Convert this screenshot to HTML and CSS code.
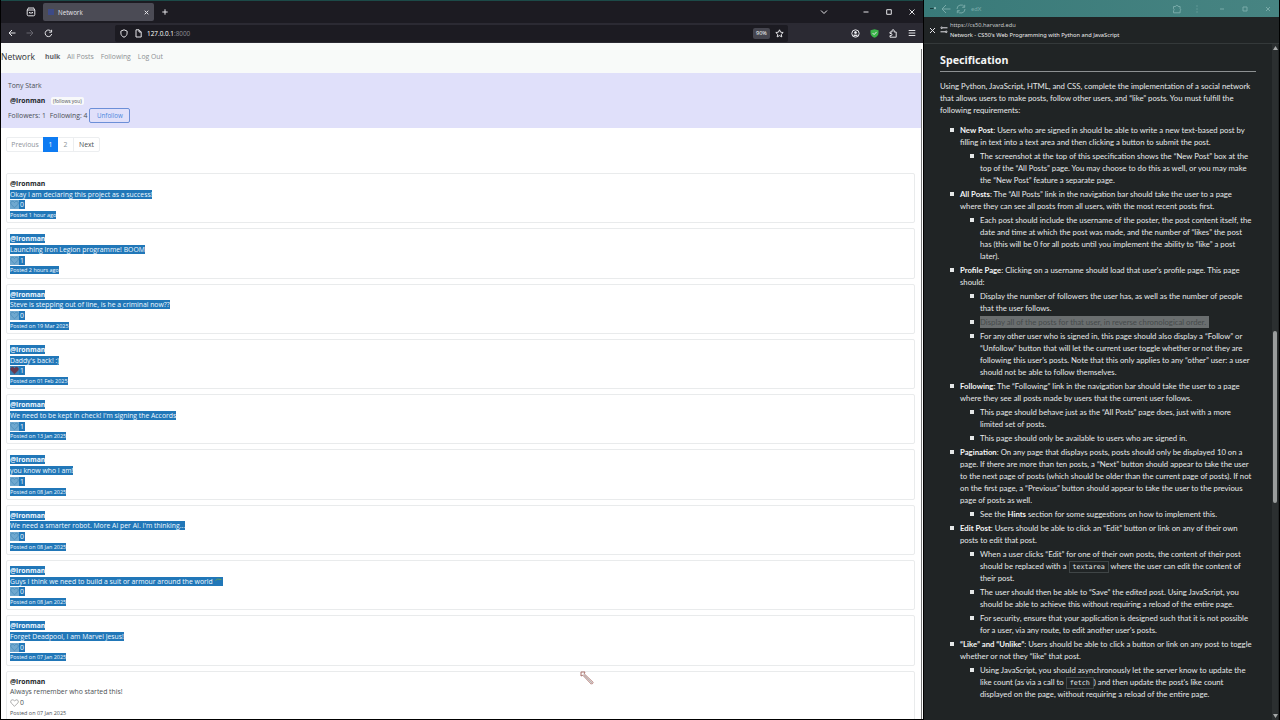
FILE: index.html
```
<!DOCTYPE html>
<html lang="en">
<head>
    <meta charset="UTF-8">
    <title>Network</title>
    <link rel="stylesheet" href="styles.css">
</head>
<body>
<div class="desktop">
    <div class="browser">
        <div class="tabs">
            <svg class="view" width="10" height="10" viewBox="0 0 10 10"><path d="M2 1h6M1.2 3h7.6v4.5a1.3 1.3 0 0 1-1.3 1.3h-5a1.3 1.3 0 0 1-1.3-1.3V3l1-1.8M8.8 3l-1-1.8M3.5 5v1h3V5"/></svg>
            <div class="tab"><i class="favicon"></i><span>Network</span>
                <svg width="5" height="5" viewBox="0 0 5 5"><path d="M.7.7l3.6 3.6M4.3.7L.7 4.3"/></svg>
            </div>
            <svg class="plus" width="6" height="6" viewBox="0 0 6 6"><path d="M3 .3v5.4M.3 3h5.4"/></svg>
            <div class="winbtns">
                <svg class="down" width="8" height="6" viewBox="0 0 8 6"><path d="M1 1.5l3 3 3-3"/></svg>
                <svg width="6" height="6" viewBox="0 0 6 6"><path d="M.5 3h5"/></svg>
                <svg width="6" height="6" viewBox="0 0 6 6"><path d="M.7.7h4.6v4.6H.7z"/></svg>
                <svg width="6" height="6" viewBox="0 0 6 6"><path d="M.5.5l5 5M5.5.5l-5 5"/></svg>
            </div>
        </div>
        <div class="toolbar">
            <svg class="back" width="8" height="8" viewBox="0 0 8 8"><path d="M7.5 4H1M4 1L1 4l3 3"/></svg>
            <svg class="forward" width="8" height="8" viewBox="0 0 8 8"><path d="M.5 4H7M4 1l3 3-3 3"/></svg>
            <svg class="reload" width="9" height="9" viewBox="0 0 9 9"><path d="M7.300 2.600A3.300 3.300 0 1 0 7.700 5M7.600.8v2.400H5.200"/></svg>
            <div class="address">
                <svg width="8" height="9" viewBox="0 0 8 9"><path d="M4 .8l3.1 1.3v2C7.100 6 6 7.500 4 8.200 2 7.500.9 6 .9 4.100v-2z"/></svg>
                <svg class="file" width="7" height="9" viewBox="0 0 7 9"><path d="M1 .8h3l2.200 2.200v5H1zM4 .8V3h2.200"/></svg>
                <span class="url"><b>127.0.0.1</b>:8000</span>
                <span class="zoom">90%</span>
                <svg class="star" width="9" height="9" viewBox="0 0 9 9"><path d="M4.500.8l1.100 2.400 2.600.3-1.900 1.800.5 2.600-2.300-1.300-2.300 1.300.5-2.600L.8 3.500l2.600-.3z"/></svg>
            </div>
            <div class="tools">
                <svg width="9" height="9" viewBox="0 0 9 9"><circle cx="4.500" cy="4.500" r="3.700"/><circle cx="4.500" cy="3.600" r="1" fill="#fbfbfe"/><path d="M2.500 6.400h4" stroke-width="1.500"/></svg>
                <svg width="9" height="9" viewBox="0 0 9 9"><path d="M4.500.3l4 1v2.400c0 2.400-1.500 4-4 5-2.500-1-4-2.600-4-5V1.300z" fill="#3bb54a" stroke="none"/><path d="M2.600 4l1.500 1.600 2.500-2.700"/></svg>
                <svg width="9" height="9" viewBox="0 0 9 9"><path d="M1 3h2V1.800a1.100 1.100 0 0 1 2.200 0V3h2v5.200H1V6.500h1a1 1 0 0 0 0-2H1z"/></svg>
                <svg width="8" height="8" viewBox="0 0 8 8"><path d="M.7 1.500h6.600M.7 4h6.600M.7 6.500h6.600"/></svg>
            </div>
        </div>
        <div class="page">
            <div class="content">
                <div class="navbar">
                    <span class="brand">Network</span>
                    <b>hulk</b>
                    <span>All Posts</span>
                    <span>Following</span>
                    <span>Log Out</span>
                </div>
                <div class="profile">
                    <p>Tony Stark</p>
                    <p class="user"><b>@ironman</b><span class="badge">(follows you)</span></p>
                    <p class="counts"><span>Followers: 1</span><span>Following: 4</span><span class="unfollow">Unfollow</span></p>
                </div>
                <div class="pagination">
                    <span class="prev">Previous</span>
                    <span class="current">1</span>
                    <span class="num">2</span>
                    <span class="next">Next</span>
                </div>
                <div class="posts">
                    <div class="post selected first">
                        <p class="name"><b>@ironman</b></p>
                        <p class="text"><span>Okay I am declaring this project as a success!</span></p>
                        <p class="like"><span><svg width="9" height="9" viewBox="0 0 9 9"><path d="M4.500 7.800L1.200 4.500C-.6 2 2.700-.1 4.500 2.500 6.300-.1 9.600 2 7.800 4.500z"/></svg>0</span></p>
                        <p class="date"><span>Posted 1 hour ago</span></p>
                    </div>
                    <div class="post selected">
                        <p class="name"><b>@ironman</b></p>
                        <p class="text"><span>Launching Iron Legion programme! BOOM</span></p>
                        <p class="like"><span><svg width="9" height="9" viewBox="0 0 9 9"><path d="M4.500 7.800L1.200 4.500C-.6 2 2.700-.1 4.500 2.500 6.300-.1 9.600 2 7.800 4.500z"/></svg>1</span></p>
                        <p class="date"><span>Posted 2 hours ago</span></p>
                    </div>
                    <div class="post selected">
                        <p class="name"><b>@ironman</b></p>
                        <p class="text"><span>Steve is stepping out of line, is he a criminal now??</span></p>
                        <p class="like"><span><svg width="9" height="9" viewBox="0 0 9 9"><path d="M4.500 7.800L1.200 4.500C-.6 2 2.700-.1 4.500 2.500 6.300-.1 9.600 2 7.800 4.500z"/></svg>0</span></p>
                        <p class="date"><span>Posted on 19 Mar 2025</span></p>
                    </div>
                    <div class="post selected">
                        <p class="name"><b>@ironman</b></p>
                        <p class="text"><span>Daddy's back! :)</span></p>
                        <p class="like liked"><span><svg width="9" height="9" viewBox="0 0 9 9"><path d="M4.500 7.800L1.200 4.500C-.6 2 2.700-.1 4.500 2.500 6.300-.1 9.600 2 7.800 4.500z"/></svg>1</span></p>
                        <p class="date"><span>Posted on 01 Feb 2025</span></p>
                    </div>
                    <div class="post selected">
                        <p class="name"><b>@ironman</b></p>
                        <p class="text"><span>We need to be kept in check! I'm signing the Accords</span></p>
                        <p class="like"><span><svg width="9" height="9" viewBox="0 0 9 9"><path d="M4.500 7.800L1.200 4.500C-.6 2 2.700-.1 4.500 2.500 6.300-.1 9.600 2 7.800 4.500z"/></svg>1</span></p>
                        <p class="date"><span>Posted on 13 Jan 2025</span></p>
                    </div>
                    <div class="post selected">
                        <p class="name"><b>@ironman</b></p>
                        <p class="text"><span>you know who I am!</span></p>
                        <p class="like"><span><svg width="9" height="9" viewBox="0 0 9 9"><path d="M4.500 7.800L1.200 4.500C-.6 2 2.700-.1 4.500 2.500 6.300-.1 9.600 2 7.800 4.500z"/></svg>1</span></p>
                        <p class="date"><span>Posted on 08 Jan 2025</span></p>
                    </div>
                    <div class="post selected">
                        <p class="name"><b>@ironman</b></p>
                        <p class="text"><span>We need a smarter robot. More AI per AI. I'm thinking...</span></p>
                        <p class="like"><span><svg width="9" height="9" viewBox="0 0 9 9"><path d="M4.500 7.800L1.200 4.500C-.6 2 2.700-.1 4.500 2.500 6.300-.1 9.600 2 7.800 4.500z"/></svg>0</span></p>
                        <p class="date"><span>Posted on 08 Jan 2025</span></p>
                    </div>
                    <div class="post selected">
                        <p class="name"><b>@ironman</b></p>
                        <p class="text"><span>Guys I think we need to build a suit or armour around the world <svg class="emoji" width="9" height="7" viewBox="0 0 9 7"><path d="M1.500 3.500l2-1.500 4 .7"/></svg></span></p>
                        <p class="like"><span><svg width="9" height="9" viewBox="0 0 9 9"><path d="M4.500 7.800L1.200 4.500C-.6 2 2.700-.1 4.500 2.500 6.300-.1 9.600 2 7.800 4.500z"/></svg>0</span></p>
                        <p class="date"><span>Posted on 08 Jan 2025</span></p>
                    </div>
                    <div class="post selected">
                        <p class="name"><b>@ironman</b></p>
                        <p class="text"><span>Forget Deadpool, I am Marvel Jesus!</span></p>
                        <p class="like"><span><svg width="9" height="9" viewBox="0 0 9 9"><path d="M4.500 7.800L1.200 4.500C-.6 2 2.700-.1 4.500 2.500 6.300-.1 9.600 2 7.800 4.500z"/></svg>0</span></p>
                        <p class="date"><span>Posted on 07 Jan 2025</span></p>
                    </div>
                    <div class="post">
                        <p class="name"><b>@ironman</b></p>
                        <p class="text"><span>Always remember who started this!</span></p>
                        <p class="like"><span><svg width="9" height="9" viewBox="0 0 9 9"><path d="M4.500 8.300L1.200 5C-.6 2.500 2.700.4 4.500 3 6.300.4 9.600 2.500 7.800 5z"/></svg>0</span></p>
                        <p class="date"><span>Posted on 07 Jan 2025</span></p>
                    </div>
                </div>
            </div>
            <div class="scroll"></div>
        </div>
    </div>

    <div class="app">
        <div class="titlebar">
            <svg class="tray" width="6" height="5" viewBox="0 0 6 5"><path d="M0 2.500h3.500" stroke="#173b3b"/><path d="M4 1.500h2L5 3.500z" fill="#d8eeee" stroke="none"/></svg>
            <svg width="10" height="10" viewBox="0 0 10 10"><path d="M9.500 5H1M5 1L1 5l4 4"/></svg>
            <svg width="10" height="10" viewBox="0 0 10 10"><path d="M1 5a4 4 0 0 1 7.500-2M9 5a4 4 0 0 1-7.500 2M8.700.8v2.500H6.200M1.300 9.200V6.700h2.500"/></svg>
            <span class="faded">edX</span>
            <div class="appbtns">
                <svg width="10" height="10" viewBox="0 0 10 10"><path d="M1.500 2.500h2.200a1.200 1.200 0 0 1 2.400 0h2v2.300a1.200 1.200 0 0 1 0 2v2H1.500v-2a1.200 1.200 0 0 0 0-2z"/></svg>
                <svg class="dots" width="4" height="8" viewBox="0 0 4 8"><path d="M2 .5v1M2 3.500v1M2 6.500v1"/></svg>
                <svg class="min" width="6" height="6" viewBox="0 0 6 6"><path d="M1 3h4"/></svg>
                <svg class="max" width="6" height="6" viewBox="0 0 6 6"><path d="M1 1h4v4H1z"/></svg>
                <svg class="shut" width="6" height="6" viewBox="0 0 6 6"><path d="M1 1l4 4M5 1L1 5"/></svg>
            </div>
        </div>
        <div class="origin">
            <svg width="7" height="7" viewBox="0 0 7 7"><path d="M1 1l5 5M6 1L1 6"/></svg>
            <svg class="tune" width="8" height="8" viewBox="0 0 8 8"><path d="M3 1.800h4.500M.5 5.800h4.500"/><circle cx="1.700" cy="1.800" r=".8"/><circle cx="6.200" cy="5.800" r=".8"/></svg>
            <p><span>https://cs50.harvard.edu</span><br>Network - CS50's Web Programming with Python and JavaScript</p>
        </div>
        <div class="reader">
            <div class="doc">
                <h2>Specification</h2>
                <p>Using Python, JavaScript, HTML, and CSS, complete the implementation of a social network<br>that allows users to make posts, follow other users, and “like” posts. You must fulfill the<br>following requirements:</p>
                <ul class="spec">
                    <li><b>New Post</b>: Users who are signed in should be able to write a new text-based post by<br>filling in text into a text area and then clicking a button to submit the post.
                        <ul>
                            <li>The screenshot at the top of this specification shows the “New Post” box at the<br>top of the “All Posts” page. You may choose to do this as well, or you may make<br>the “New Post” feature a separate page.</li>
                        </ul>
                    </li>
                    <li><b>All Posts</b>: The “All Posts” link in the navigation bar should take the user to a page<br>where they can see all posts from all users, with the most recent posts first.
                        <ul>
                            <li>Each post should include the username of the poster, the post content itself, the<br>date and time at which the post was made, and the number of “likes” the post<br>has (this will be 0 for all posts until you implement the ability to “like” a post<br>later).</li>
                        </ul>
                    </li>
                    <li><b>Profile Page</b>: Clicking on a username should load that user's profile page. This page<br>should:
                        <ul>
                            <li>Display the number of followers the user has, as well as the number of people<br>that the user follows.</li>
                            <li><span class="marked">Display all of the posts for that user, in reverse chronological order.</span></li>
                            <li>For any other user who is signed in, this page should also display a “Follow” or<br>“Unfollow” button that will let the current user toggle whether or not they are<br>following this user's posts. Note that this only applies to any “other” user: a user<br>should not be able to follow themselves.</li>
                        </ul>
                    </li>
                    <li><b>Following</b>: The “Following” link in the navigation bar should take the user to a page<br>where they see all posts made by users that the current user follows.
                        <ul>
                            <li>This page should behave just as the “All Posts” page does, just with a more<br>limited set of posts.</li>
                            <li>This page should only be available to users who are signed in.</li>
                        </ul>
                    </li>
                    <li><b>Pagination</b>: On any page that displays posts, posts should only be displayed 10 on a<br>page. If there are more than ten posts, a “Next” button should appear to take the user<br>to the next page of posts (which should be older than the current page of posts). If not<br>on the first page, a “Previous” button should appear to take the user to the previous<br>page of posts as well.
                        <ul>
                            <li>See the <b>Hints</b> section for some suggestions on how to implement this.</li>
                        </ul>
                    </li>
                    <li><b>Edit Post</b>: Users should be able to click an “Edit” button or link on any of their own<br>posts to edit that post.
                        <ul>
                            <li>When a user clicks “Edit” for one of their own posts, the content of their post<br>should be replaced with a <code>textarea</code> where the user can edit the content of<br>their post.</li>
                            <li>The user should then be able to “Save” the edited post. Using JavaScript, you<br>should be able to achieve this without requiring a reload of the entire page.</li>
                            <li>For security, ensure that your application is designed such that it is not possible<br>for a user, via any route, to edit another user's posts.</li>
                        </ul>
                    </li>
                    <li><b>“Like” and “Unlike”</b>: Users should be able to click a button or link on any post to toggle<br>whether or not they “like” that post.
                        <ul>
                            <li>Using JavaScript, you should asynchronously let the server know to update the<br>like count (as via a call to <code>fetch</code>) and then update the post's like count<br>displayed on the page, without requiring a reload of the entire page.</li>
                        </ul>
                    </li>
                </ul>
                <h2 class="hints">Hints</h2>
            </div>
            <div class="track">
                <svg width="5" height="4" viewBox="0 0 5 4"><path d="M0 4h5L2.500 0z"/></svg>
                <i class="thumb"></i>
                <svg width="5" height="4" viewBox="0 0 5 4"><path d="M0 0h5L2.500 4z"/></svg>
            </div>
        </div>
    </div>
</div>
<svg class="cursor" width="14" height="15" viewBox="0 0 14 15"><path d="M1 5V1h4L4.200 2.800l9 8.700-1.700 1.700-8.700-9z" fill="#fff" stroke="#a8706a"/><path d="M3.500 3.500l8.500 8.500" stroke="#999" stroke-width=".7"/></svg>
</body>
</html>
```
FILE: styles.css
```
* {
    margin: 0;
    padding: 0;
    box-sizing: border-box;
}

body {
    width: 1280px;
    height: 720px;
    overflow: hidden;
    background: #000;
    font-family: "Open Sans", "Noto Sans", sans-serif;
    font-size: 6.83px;
    white-space: nowrap;
}

ul {
    list-style: none;
}

svg {
    display: block;
    flex: none;
    fill: none;
    stroke: #e4e4e8;
}

.desktop {
    display: flex;
    height: 720px;
    padding-left: 1px;
}

/* browser window */
.browser {
    display: flex;
    flex-direction: column;
    width: 922px;
    height: 719px;
    border-top: 1px solid #1c4a48;
}

.tabs {
    display: flex;
    align-items: center;
    height: 22px;
    background: #1c1b22;
}

.tabs .view {
    margin-left: 25px;
}

.tab {
    display: flex;
    align-items: center;
    width: 111px;
    height: 18px;
    margin-left: 7px;
    padding: 0 5px 0 5px;
    border-radius: 2px;
    background: #4b4b55;
    color: #e8e8ee;
    font-size: 6.2px;
}

.tab span {
    flex: 1;
    margin-left: 4px;
}

.favicon {
    width: 6px;
    height: 6px;
    background: #3d4a86;
}

.plus {
    margin-left: 8px;
}

.winbtns {
    display: flex;
    align-items: center;
    gap: 17px;
    margin-left: auto;
    margin-right: 8px;
}

.winbtns .down {
    margin-right: 18px;
}

.toolbar {
    display: flex;
    align-items: center;
    height: 20px;
    padding-left: 7px;
    background: #2b2a33;
}

.toolbar .forward {
    margin-left: 10px;
    stroke: #66656e;
}

.toolbar .reload {
    margin-left: 10px;
}

.address {
    display: flex;
    align-items: center;
    width: 673px;
    height: 17px;
    margin-left: 62px;
    padding-left: 5px;
    border-radius: 2px;
    background: #1c1b22;
}

.address .file {
    margin-left: 7px;
}

.url {
    margin-left: 5px;
    font-size: 6.4px;
    color: #8f8f98;
}

.url b {
    font-weight: 400;
    color: #fff;
}

.zoom {
    width: 17px;
    height: 11px;
    margin-left: auto;
    border-radius: 2px;
    background: #45454f;
    color: #fff;
    font-size: 5.5px;
    line-height: 11px;
    text-align: center;
}

.address .star {
    margin: 0 4px 0 5px;
}

.tools {
    display: flex;
    align-items: center;
    gap: 10px;
    margin-left: auto;
    margin-right: 7px;
}

.page {
    display: flex;
    flex: 1;
    min-height: 0;
    background: #fff;
    color: #4a4f54;
}

.content {
    width: 920px;
    overflow: hidden;
}

.scroll {
    width: 1px;
    margin-top: 6px;
    background: #777;
}

.navbar {
    display: flex;
    align-items: center;
    height: 30px;
    padding-bottom: 4px;
    background: #f8faf9;
    color: #8d9093;
}

.navbar .brand {
    width: 44px;
    color: #2e3236;
    font-size: 8.5px;
}

.navbar b {
    width: 22px;
    color: #62666a;
}

.navbar span + span,
.navbar b + span {
    margin-right: 7px;
}

.profile {
    height: 55px;
    padding: 7px 0 0 7px;
    background: #e0e0fa;
}

.profile p {
    height: 11px;
    line-height: 11px;
}

.profile .user {
    display: flex;
    margin-top: 4px;
    padding-left: 2px;
}

.user b {
    width: 41px;
    color: #212529;
}

.badge {
    height: 8px;
    margin-top: 2px;
    padding: 0 2px;
    border-radius: 2px;
    background: #f8f9fa;
    font-size: 4.9px;
    line-height: 8px;
}

.profile .counts {
    display: flex;
    align-items: center;
    height: 15px;
    margin-top: 2px;
}

.counts span {
    margin-right: 4px;
}

.counts .unfollow {
    width: 41px;
    height: 15px;
    margin-left: -2px;
    border: 1px solid #6c8fd8;
    border-radius: 2px;
    color: #4a86dd;
    font-size: 6.2px;
    line-height: 13px;
    text-align: center;
}

.pagination {
    display: flex;
    width: 94px;
    height: 15px;
    margin: 9px 0 0 5px;
    border: 1px solid #eceef0;
    border-radius: 2px;
    line-height: 13px;
    text-align: center;
}

.prev {
    width: 36px;
    color: #8d9399;
}

.pagination .current {
    width: 15px;
    height: 15px;
    margin-top: -1px;
    background: #0d7bf2;
    color: #fff;
    line-height: 15px;
}

.num {
    width: 16px;
    border-right: 1px solid #eceef0;
    color: #8d9399;
}

.next {
    flex: 1;
}

.posts {
    margin: 21px 6px 0 5px;
}

.post {
    height: 50.3px;
    margin-bottom: 5px;
    padding: 5px 0 0 3px;
    border: 1px solid #e9ebec;
    border-radius: 2px;
}

.post p {
    height: 10.7px;
    line-height: 9px;
}

.post span,
.post b {
    display: inline-block;
    height: 9px;
}

.post b {
    color: #212529;
}

.like span {
    display: flex;
    gap: 1px;
    width: 15px;
}

.like svg {
    stroke: #888;
    stroke-width: .7;
}

.date {
    font-size: 5.45px;
}

.post .date span {
    height: 8px;
    line-height: 8px;
}

.selected span,
.selected b {
    background: #2177b8;
    color: #f0f9ff;
}

.selected.first b {
    background: none;
    color: #212529;
}

.selected .like svg {
    background: #6fa8cf;
    stroke: #4487b5;
}

.selected .liked svg {
    background: #3b80b4;
    fill: #68394d;
    stroke: #68394d;
}

.selected .emoji {
    display: inline-block;
    stroke: #5fa05f;
}

/* course page window */
.app {
    display: flex;
    flex-direction: column;
    width: 355px;
    height: 720px;
    margin-left: 1px;
    background: #202425;
    color: #e6e9ea;
    font-family: Lato, "Noto Sans", sans-serif;
}

.titlebar {
    display: flex;
    align-items: center;
    gap: 5px;
    height: 17px;
    padding-left: 6px;
    background: linear-gradient(90deg, #397a79, #478482);
}

.titlebar svg {
    stroke: #78aaa8;
}

.faded {
    color: #78aaa8;
    font-size: 6px;
}

.appbtns {
    display: flex;
    align-items: center;
    margin-left: auto;
    margin-right: 8px;
}

.appbtns .dots {
    margin-left: 13px;
}

.appbtns .min {
    margin-left: 20px;
}

.appbtns .max,
.appbtns .shut {
    margin-left: 17px;
}

.origin {
    display: flex;
    align-items: center;
    height: 27px;
    padding-left: 5px;
    border-bottom: 1px solid #34393a;
    color: #eee;
    font-family: "Noto Sans", sans-serif;
    font-size: 5.7px;
    line-height: 10px;
}

.origin .tune {
    margin: 0 2px 0 4px;
}

.origin span {
    color: #c2c5c5;
}

.reader {
    display: flex;
    flex: 1;
    min-height: 0;
}

.doc {
    width: 348px;
    padding: 7.500px 0 0 16px;
    overflow: hidden;
    font-size: 7.76px;
    line-height: 12px;
}

.doc h2 {
    width: 316px;
    height: 20px;
    margin-bottom: 8px;
    border-bottom: 1px solid #8d9192;
    color: #f4f5f5;
    font-family: "Noto Sans", sans-serif;
    font-size: 10.7px;
    line-height: 16px;
}

.doc .hints {
    margin-top: 16px;
}

.spec {
    margin-top: 8px;
}

.spec li {
    position: relative;
    margin-top: 2px;
    padding-left: 20px;
}

.spec li::before {
    content: "";
    position: absolute;
    left: 10px;
    top: 4px;
    width: 4px;
    height: 4px;
    background: #e6e8e8;
}

.spec b {
    color: #f4f5f5;
}

.marked {
    display: inline-block;
    width: 229px;
    height: 12px;
    background: #6a6e6f;
    color: #454a4b;
    vertical-align: top;
}

code {
    padding: 1px 3px;
    border: 1px solid #3f4546;
    font-family: "DejaVu Sans Mono", monospace;
    font-size: 6.7px;
    line-height: 1;
}

.track {
    display: flex;
    flex-direction: column;
    align-items: center;
    justify-content: space-between;
    width: 6px;
    padding: 2px 0;
    background: #2b2f30;
}

.track svg {
    fill: #a5a8a8;
    stroke: none;
}

.thumb {
    width: 4px;
    height: 172px;
    margin-top: 70px;
    border-radius: 2px;
    background: #9a9d9d;
}

.cursor {
    position: absolute;
    left: 580px;
    top: 671px;
}
```
